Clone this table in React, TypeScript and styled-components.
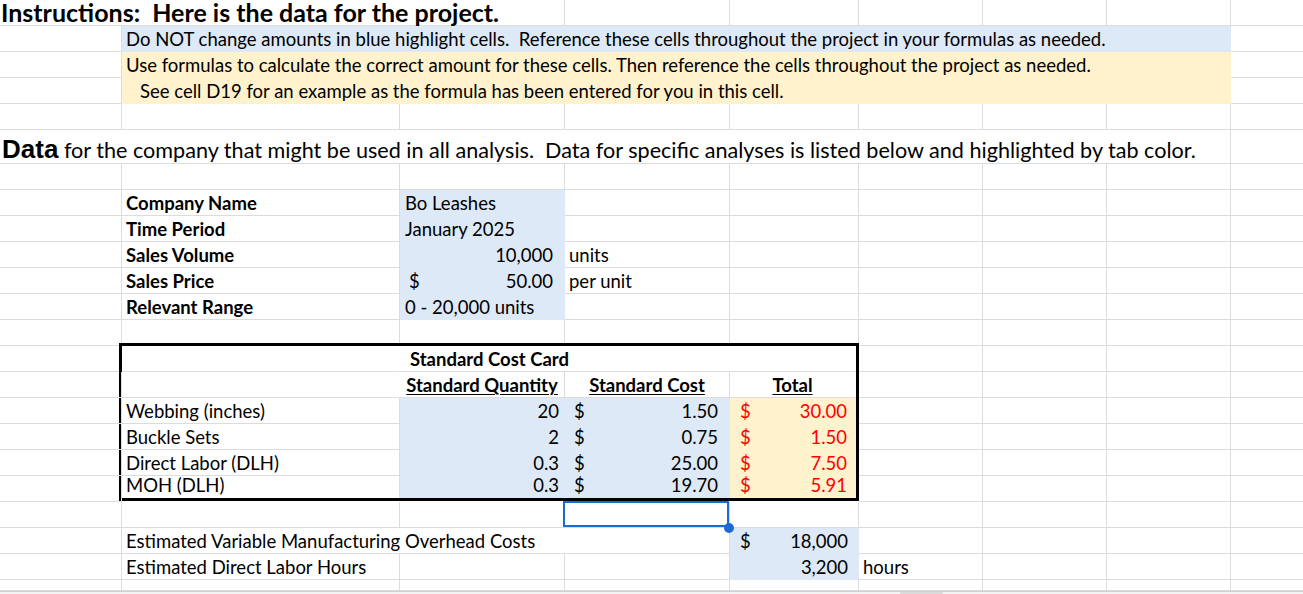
import React from 'react';
import styled, { createGlobalStyle } from 'styled-components';

const GRID = '#dcdcdc';
const BLUE = '#dde9f6';
const YELLOW = '#fff2cc';
const RED = '#ff0000';
const SELECT = '#1a6bd8';
const BODY_FONT = `Lato, "Open Sans", "Noto Sans", sans-serif`;

const GlobalStyle = createGlobalStyle`
  html, body {
    margin: 0;
    padding: 0;
    background: #ffffff;
    overflow: hidden;
  }
  body {
    font-family: ${BODY_FONT};
    color: #000;
  }
`;

const Page = styled.div`
  width: 1303px;
  height: 594px;
  overflow: hidden;
  display: flex;
  flex-direction: column;
`;

const Sheet = styled.div`
  width: 1355px;
  display: grid;
  grid-template-columns: 122px 278px 165px 165px 129px 124px 124px 124px 124px;
  grid-template-rows: 26px repeat(4, 26px) 34px repeat(16, 26px) 11px;
`;

type CellProps = {
  $fill?: string;
  $align?: 'left' | 'right' | 'center';
  $bold?: boolean;
  $noRight?: boolean;
  $noBottom?: boolean;
  $span?: number;
  $pl?: number;
  $pr?: number;
  $color?: string;
};

const Cell = styled.div<CellProps>`
  box-sizing: border-box;
  min-width: 0;
  min-height: 0;
  display: flex;
  align-items: flex-end;
  justify-content: ${(p) =>
    p.$align === 'right' ? 'flex-end' : p.$align === 'center' ? 'center' : 'flex-start'};
  grid-column: span ${(p) => p.$span ?? 1};
  padding: 0 ${(p) => p.$pr ?? 4}px 1px ${(p) => p.$pl ?? 4}px;
  background: ${(p) => p.$fill ?? 'transparent'};
  border-right: 1px solid ${(p) => (p.$noRight ? 'transparent' : p.$fill ?? GRID)};
  border-bottom: 1px solid ${(p) => (p.$noBottom ? 'transparent' : p.$fill ?? GRID)};
  font-size: 18.5px;
  line-height: 22px;
  font-weight: ${(p) => (p.$bold ? 700 : 400)};
  color: ${(p) => p.$color ?? '#000'};
  white-space: pre;
`;

const TitleCell = styled(Cell)`
  padding-bottom: 0;
  font-size: 25px;
  line-height: 25px;
  font-weight: 700;
`;

const DataCell = styled(Cell)`
  padding-bottom: 0;
  font-size: 21.6px;
  line-height: 26px;
`;

const DataWord = styled.span`
  font-family: "Liberation Sans", Arial, sans-serif;
  font-weight: 700;
  font-size: 26px;
  line-height: 1;
`;

const Acct = styled(Cell)`
  justify-content: space-between;
`;

const HeadText = styled.span`
  font-weight: 700;
  text-decoration: underline;
  text-decoration-thickness: 1px;
  text-underline-offset: 2px;
`;

const CardBox = styled.div`
  grid-column: 2 / span 4;
  grid-row: span 6;
  margin: -3px 0 1px -3px;
  border: 3px solid #000;
  display: grid;
  grid-template-columns: 278px 165px 165px minmax(0, 1fr);
  grid-template-rows: repeat(5, 26px) minmax(0, 1fr);
`;

const SelectedCell = styled(Cell)`
  position: relative;
  z-index: 2;
`;

const SelectionFrame = styled.div`
  position: absolute;
  left: -2px;
  top: -1px;
  right: 0;
  bottom: 0;
  border: 2px solid ${SELECT};
`;

const FillHandle = styled.div`
  position: absolute;
  right: -5px;
  bottom: -6px;
  width: 10px;
  height: 10px;
  border-radius: 50%;
  background: ${SELECT};
`;

const HScroll = styled.div`
  box-sizing: border-box;
  height: 3px;
  border-top: 1px solid #cfcfcf;
  background: #f3f3f3;
  display: flex;
`;

const ScrollThumb = styled.div`
  margin-left: 900px;
  width: 43px;
  height: 2px;
  border-radius: 1px;
  background: #dadada;
`;

const Empty = ({ n }: { n: number }) => (
  <>
    {Array.from({ length: n }, (_, i) => (
      <Cell key={i} />
    ))}
  </>
);

const costRows = [
  { label: 'Webbing (inches)', qty: '20', cost: '1.50', total: '30.00' },
  { label: 'Buckle Sets', qty: '2', cost: '0.75', total: '1.50' },
  { label: 'Direct Labor (DLH)', qty: '0.3', cost: '25.00', total: '7.50' },
  { label: 'MOH (DLH)', qty: '0.3', cost: '19.70', total: '5.91' },
];

const CostCard = () => (
  <CardBox>
    <Cell $noRight />
    <Cell $span={3} $bold $pl={10} $noRight>
      Standard Cost Card
    </Cell>

    <Cell $noRight />
    <Cell $align="center">
      <HeadText>Standard Quantity</HeadText>
    </Cell>
    <Cell $align="center">
      <HeadText>Standard Cost</HeadText>
    </Cell>
    <Cell $align="center" $noRight>
      <HeadText>Total</HeadText>
    </Cell>

    {costRows.map((r, i) => {
      const last = i === costRows.length - 1;
      return (
        <React.Fragment key={r.label}>
          <Cell $noBottom={last}>{r.label}</Cell>
          <Cell $fill={BLUE} $align="right" $pr={5}>
            {r.qty}
          </Cell>
          <Acct $fill={BLUE} $pl={9} $pr={11}>
            <span>$</span>
            <span>{r.cost}</span>
          </Acct>
          <Acct $fill={YELLOW} $pl={10} $pr={8} $color={RED} $noRight>
            <span>$</span>
            <span>{r.total}</span>
          </Acct>
        </React.Fragment>
      );
    })}
  </CardBox>
);

const App: React.FC = () => {
  return (
    <>
      <GlobalStyle />
      <Page>
        <Sheet>
          {/* row 1 */}
          <TitleCell $span={3} $pl={1}>
            Instructions:  Here is the data for the project.
          </TitleCell>
          <Empty n={6} />

          {/* rows 2-4: legend */}
          <Cell />
          <Cell $span={7} $fill={BLUE}>
            Do NOT change amounts in blue highlight cells.  Reference these cells throughout the project in your formulas as needed.
          </Cell>
          <Cell />
          <Cell />
          <Cell $span={7} $fill={YELLOW}>
            Use formulas to calculate the correct amount for these cells. Then reference the cells throughout the project as needed.
          </Cell>
          <Cell />
          <Cell />
          <Cell $span={7} $fill={YELLOW} $pl={18}>
            See cell D19 for an example as the formula has been entered for you in this cell.
          </Cell>
          <Cell />

          <Empty n={9} />

          {/* row 6 */}
          <DataCell $span={8} $pl={2}>
            <span>
              <DataWord>Data</DataWord> for the company that might be used in all analysis.  Data for specific analyses is listed below and highlighted by tab color.
            </span>
          </DataCell>
          <Cell />

          <Empty n={9} />

          {/* rows 8-12: company data */}
          <Cell />
          <Cell $bold>Company Name</Cell>
          <Cell $fill={BLUE} $pl={5}>Bo Leashes</Cell>
          <Empty n={6} />

          <Cell />
          <Cell $bold>Time Period</Cell>
          <Cell $fill={BLUE} $pl={5}>January 2025</Cell>
          <Empty n={6} />

          <Cell />
          <Cell $bold>Sales Volume</Cell>
          <Cell $fill={BLUE} $align="right" $pr={11}>10,000</Cell>
          <Cell>units</Cell>
          <Empty n={5} />

          <Cell />
          <Cell $bold>Sales Price</Cell>
          <Acct $fill={BLUE} $pl={9} $pr={11}>
            <span>$</span>
            <span>50.00</span>
          </Acct>
          <Cell>per unit</Cell>
          <Empty n={5} />

          <Cell />
          <Cell $bold>Relevant Range</Cell>
          <Cell $fill={BLUE} $pl={5}>0 - 20,000 units</Cell>
          <Empty n={6} />

          <Empty n={9} />

          {/* rows 14-19: standard cost card */}
          <Cell />
          <CostCard />
          <Empty n={4} />
          {Array.from({ length: 5 }, (_, i) => (
            <Empty key={i} n={5} />
          ))}

          {/* row 20 */}
          <Empty n={3} />
          <SelectedCell>
            <SelectionFrame />
            <FillHandle />
          </SelectedCell>
          <Empty n={5} />

          {/* row 21 */}
          <Cell />
          <Cell $span={3}>Estimated Variable Manufacturing Overhead Costs</Cell>
          <Acct $fill={BLUE} $pl={10} $pr={10}>
            <span>$</span>
            <span>18,000</span>
          </Acct>
          <Empty n={4} />

          {/* row 22 */}
          <Cell />
          <Cell>Estimated Direct Labor Hours</Cell>
          <Empty n={2} />
          <Cell $fill={BLUE} $align="right" $pr={10}>3,200</Cell>
          <Cell>hours</Cell>
          <Empty n={3} />

          <Empty n={9} />
        </Sheet>
        <HScroll>
          <ScrollThumb />
        </HScroll>
      </Page>
    </>
  );
};

export default App;
